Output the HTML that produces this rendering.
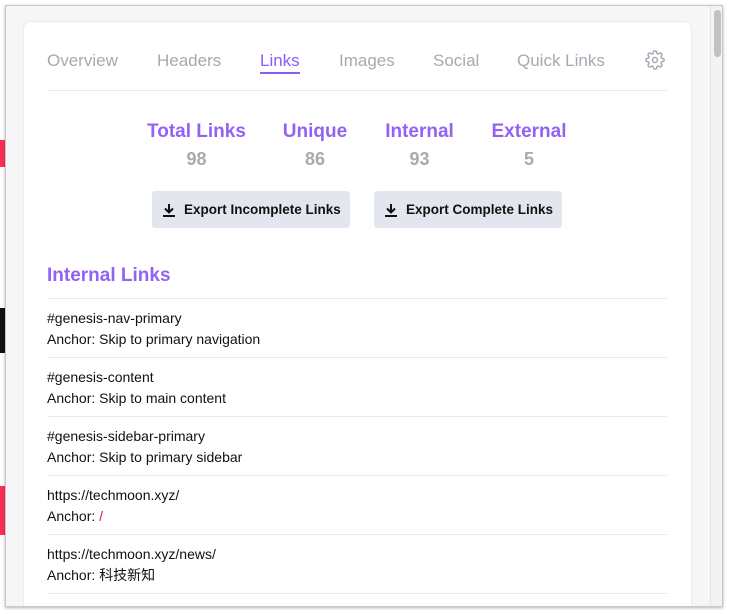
<!DOCTYPE html>
<html><head><meta charset="utf-8"><style>
*{margin:0;padding:0;box-sizing:border-box}
body{width:729px;height:614px;overflow:hidden;background:#fff;font-family:"Liberation Sans","Noto Sans CJK SC",sans-serif;position:relative}
.win{position:absolute;left:5px;top:5px;width:718px;height:602px;background:#f6f6f8;border:1px solid #c8c8cc;box-shadow:0 1px 3px rgba(0,0,0,.3);overflow:hidden}
.card{position:absolute;left:17px;top:15px;width:669px;height:620px;background:#fff;border-radius:8px;border:1px solid #ececf0}
.sb{position:absolute;left:704px;top:0;width:13px;height:602px;background:#f3f3f3;border-left:1px solid #e4e4e4}
.sb div{position:absolute;left:3px;top:4px;width:7px;height:47px;border-radius:4px;background:#c2c2c2}
.t{position:absolute;font-size:17px;color:#a8a8b3;top:51px}
.hr{position:absolute;left:47px;width:620px;height:1px;background:#e8e8ee}
.st{position:absolute;top:121px;font-size:19px;font-weight:bold;color:#9461f5;text-align:center;white-space:nowrap}
.st b{display:block;color:#a9a9b0;font-size:18px;margin-top:6px}
.btn{position:absolute;top:191px;height:37px;background:#e3e6ee;border-radius:3px;font-size:13.5px;font-weight:bold;color:#111;line-height:38px}
.btn svg{position:absolute;left:10px;top:12px}
.row{position:absolute;left:47px;font-size:14px;color:#111;line-height:21px}
</style></head><body>
<div style="position:absolute;left:0;top:140px;width:5px;height:27px;background:#ff2d55"></div>
<div style="position:absolute;left:0;top:308px;width:5px;height:45px;background:#111"></div>
<div style="position:absolute;left:0;top:486px;width:5px;height:49px;background:#ff2d55"></div>
<div class="win">
<div class="card"></div>
<div class="sb"><div></div></div>
</div>
<div class="t" style="left:47px">Overview</div>
<div class="t" style="left:157px">Headers</div>
<div class="t" style="left:260px;color:#8b5cf6">Links</div>
<div style="position:absolute;left:260px;top:72px;width:40px;height:2px;background:#8b5cf6"></div>
<div class="t" style="left:339px">Images</div>
<div class="t" style="left:433px">Social</div>
<div class="t" style="left:517px">Quick Links</div>
<svg style="position:absolute;left:645px;top:50px" width="20" height="20" viewBox="0 0 24 24" fill="none" stroke="#a8a8b3" stroke-width="1.8"><circle cx="12" cy="12" r="3"/><path d="M19.4 15a1.65 1.65 0 0 0 .33 1.82l.06.06a2 2 0 1 1-2.830 2.83l-.06-.06a1.65 1.65 0 0 0-1.82-.33 1.65 1.65 0 0 0-1 1.51V21a2 2 0 1 1-4 0v-.09A1.65 1.65 0 0 0 9 19.4a1.65 1.65 0 0 0-1.82.33l-.06.06a2 2 0 1 1-2.83-2.83l.06-.06a1.65 1.65 0 0 0 .33-1.82 1.65 1.65 0 0 0-1.51-1H3a2 2 0 1 1 0-4h.09A1.65 1.65 0 0 0 4.600 9a1.65 1.65 0 0 0-.33-1.820l-.06-.06a2 2 0 1 1 2.83-2.83l.06.06a1.65 1.65 0 0 0 1.82.33H9a1.65 1.65 0 0 0 1-1.51V3a2 2 0 1 1 4 0v.09a1.65 1.65 0 0 0 1 1.51 1.65 1.65 0 0 0 1.82-.33l.06-.06a2 2 0 1 1 2.83 2.83l-.06.06a1.65 1.65 0 0 0-.33 1.82V9a1.65 1.65 0 0 0 1.51 1H21a2 2 0 1 1 0 4h-.09a1.65 1.65 0 0 0-1.51 1z"/></svg>
<div class="hr" style="top:90px"></div>
<div class="st" style="left:145px;width:103px">Total Links<b>98</b></div>
<div class="st" style="left:279px;width:72px">Unique<b>86</b></div>
<div class="st" style="left:380px;width:79px">Internal<b>93</b></div>
<div class="st" style="left:487px;width:84px">External<b>5</b></div>
<div class="btn" style="left:152px;width:198px;padding-left:32px">Export Incomplete Links<svg width="14" height="14" viewBox="0 0 14 14"><path d="M7 1v8M3 5.5l4 4 4-4" stroke="#111" stroke-width="2" fill="none"/><rect x="1" y="12" width="12" height="2" fill="#111"/></svg></div>
<div class="btn" style="left:374px;width:188px;padding-left:32px">Export Complete Links<svg width="14" height="14" viewBox="0 0 14 14"><path d="M7 1v8M3 5.5l4 4 4-4" stroke="#111" stroke-width="2" fill="none"/><rect x="1" y="12" width="12" height="2" fill="#111"/></svg></div>
<div style="position:absolute;left:47px;top:265px;font-size:19px;font-weight:bold;color:#9461f5">Internal Links</div>
<div class="hr" style="top:298px"></div>
<div class="row" style="top:308px">#genesis-nav-primary<br>Anchor: Skip to primary navigation</div>
<div class="hr" style="top:357px"></div>
<div class="row" style="top:367px">#genesis-content<br>Anchor: Skip to main content</div>
<div class="hr" style="top:416px"></div>
<div class="row" style="top:426px">#genesis-sidebar-primary<br>Anchor: Skip to primary sidebar</div>
<div class="hr" style="top:475px"></div>
<div class="row" style="top:485px">https://techmoon.xyz/<br>Anchor: <span style="color:#e0192c">/</span></div>
<div class="hr" style="top:534px"></div>
<div class="row" style="top:544px">https://techmoon.xyz/news/<br>Anchor: 科技新知</div>
<div class="hr" style="top:593px"></div>
</body></html>
